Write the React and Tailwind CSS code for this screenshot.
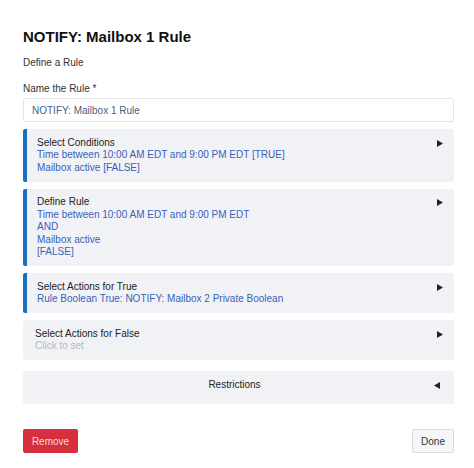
import React from "react";

const font = { fontFamily: '"Liberation Sans", Arial, sans-serif' };

const Arrow = ({ left }) => (
  <svg width="6" height="7" viewBox="0 0 6 7" className="mt-[3px] shrink-0">
    {left ? <polygon points="6,0 6,7 0,3.5" fill="#222" /> : <polygon points="0,0 0,7 6,3.5" fill="#222" />}
  </svg>
);

const Section = ({ title, lines, active, placeholder }) => (
  <div
    className={`flex items-start justify-between rounded-[2px] bg-[#f1f2f6] pr-[11px] py-[7.5px] ${
      active ? "border-l-[4px] border-[#1b6ec2] pl-[10px]" : "pl-[12px]"
    }`}
  >
    <div className="text-[10px] leading-[12.5px]">
      <div className="text-[#222]">{title}</div>
      {lines.map((l, i) => (
        <div key={i} className="text-[#3a5fb8]">
          {l}
        </div>
      ))}
      {placeholder && <div className="text-[#b5b8c0]">{placeholder}</div>}
    </div>
    <Arrow />
  </div>
);

const App = () => {
  return (
    <div style={font} className="w-[474px] h-[468px] bg-white pl-[23px] pr-[20px] pt-[28px] text-[#222]">
      <h1 className="text-[15px] leading-[18px] font-bold text-[#111]">NOTIFY: Mailbox 1 Rule</h1>
      <p className="mt-[9.5px] text-[10px] leading-[13px] text-[#333]">Define a Rule</p>
      <p className="mt-[13px] text-[10px] leading-[13px] text-[#333]">Name the Rule *</p>
      <div className="mt-[3.5px] h-[24px] flex items-center border border-[#e3e5ea] rounded-[2px] px-[8px] text-[10px] text-[#4a5c86]">
        NOTIFY: Mailbox 1 Rule
      </div>

      <div className="mt-[7px] flex flex-col gap-[7px]">
        <Section
          active
          title="Select Conditions"
          lines={["Time between 10:00 AM EDT and 9:00 PM EDT [TRUE]", "Mailbox active [FALSE]"]}
        />
        <Section
          active
          title="Define Rule"
          lines={["Time between 10:00 AM EDT and 9:00 PM EDT", "AND", "Mailbox active", "[FALSE]"]}
        />
        <Section
          active
          title="Select Actions for True"
          lines={["Rule Boolean True: NOTIFY: Mailbox 2 Private Boolean"]}
        />
        <Section title="Select Actions for False" lines={[]} placeholder="Click to set" />
      </div>

      <div className="mt-[11px] h-[33px] flex items-start rounded-[2px] bg-[#f1f2f6] pt-[7.5px] pl-[12px] pr-[14px]">
        <div className="flex-1 text-center text-[10px] leading-[12.5px] text-[#222]">Restrictions</div>
        <Arrow left />
      </div>

      <div className="mt-[25px] flex items-center justify-between">
        <button className="h-[24px] w-[55px] rounded-[2px] bg-[#d4303e] text-[10px] text-[#fbd7db]">Remove</button>
        <button className="h-[24px] w-[42px] rounded-[2px] border border-[#d9dbe0] bg-[#f6f6f8] text-[10px] text-[#333]">
          Done
        </button>
      </div>
    </div>
  );
};

export default App;
